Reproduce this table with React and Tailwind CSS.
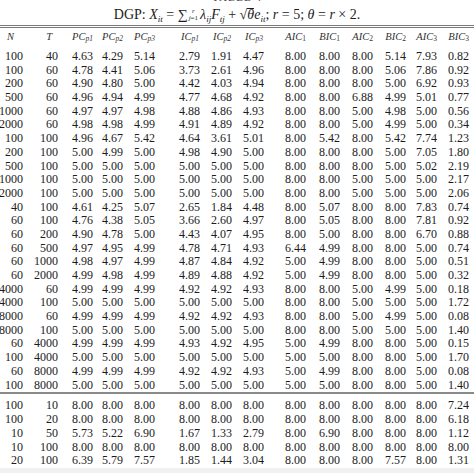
import React from "react";

const block1 = [
  "100 40 4.63 4.29 5.14 2.79 1.91 4.47 8.00 8.00 8.00 5.14 7.93 0.82",
  "100 60 4.78 4.41 5.06 3.73 2.61 4.96 8.00 8.00 8.00 5.06 7.86 0.92",
  "200 60 4.90 4.80 5.00 4.42 4.03 4.94 8.00 8.00 8.00 5.00 6.92 0.93",
  "500 60 4.96 4.94 4.99 4.77 4.68 4.92 8.00 8.00 6.88 4.99 5.01 0.77",
  "1000 60 4.97 4.97 4.98 4.88 4.86 4.93 8.00 8.00 5.00 4.98 5.00 0.56",
  "2000 60 4.98 4.98 4.99 4.91 4.89 4.92 8.00 8.00 5.00 4.99 5.00 0.34",
  "100 100 4.96 4.67 5.42 4.64 3.61 5.01 8.00 5.42 8.00 5.42 7.74 1.23",
  "200 100 5.00 4.99 5.00 4.98 4.90 5.00 8.00 8.00 8.00 5.00 7.05 1.80",
  "500 100 5.00 5.00 5.00 5.00 5.00 5.00 8.00 8.00 8.00 5.00 5.02 2.19",
  "1000 100 5.00 5.00 5.00 5.00 5.00 5.00 8.00 8.00 5.00 5.00 5.00 2.17",
  "2000 100 5.00 5.00 5.00 5.00 5.00 5.00 8.00 8.00 5.00 5.00 5.00 2.06",
  "40 100 4.61 4.25 5.07 2.65 1.84 4.48 8.00 5.07 8.00 8.00 7.83 0.74",
  "60 100 4.76 4.38 5.05 3.66 2.60 4.97 8.00 5.05 8.00 8.00 7.81 0.92",
  "60 200 4.90 4.78 5.00 4.43 4.07 4.95 8.00 5.00 8.00 8.00 6.70 0.88",
  "60 500 4.97 4.95 4.99 4.78 4.71 4.93 6.44 4.99 8.00 8.00 5.00 0.74",
  "60 1000 4.98 4.97 4.99 4.87 4.84 4.92 5.00 4.99 8.00 8.00 5.00 0.51",
  "60 2000 4.99 4.98 4.99 4.89 4.88 4.92 5.00 4.99 8.00 8.00 5.00 0.32",
  "4000 60 4.99 4.99 4.99 4.92 4.92 4.93 8.00 8.00 5.00 4.99 5.00 0.18",
  "4000 100 5.00 5.00 5.00 5.00 5.00 5.00 8.00 8.00 5.00 5.00 5.00 1.72",
  "8000 60 4.99 4.99 4.99 4.92 4.92 4.93 8.00 8.00 5.00 4.99 5.00 0.08",
  "8000 100 5.00 5.00 5.00 5.00 5.00 5.00 8.00 8.00 5.00 5.00 5.00 1.40",
  "60 4000 4.99 4.99 4.99 4.93 4.92 4.95 5.00 4.99 8.00 8.00 5.00 0.15",
  "100 4000 5.00 5.00 5.00 5.00 5.00 5.00 5.00 5.00 8.00 8.00 5.00 1.70",
  "60 8000 4.99 4.99 4.99 4.92 4.92 4.93 5.00 4.99 8.00 8.00 5.00 0.08",
  "100 8000 5.00 5.00 5.00 5.00 5.00 5.00 5.00 5.00 8.00 8.00 5.00 1.40",
];

const block2 = [
  "100 10 8.00 8.00 8.00 8.00 8.00 8.00 8.00 8.00 8.00 8.00 8.00 7.24",
  "100 20 8.00 8.00 8.00 8.00 8.00 8.00 8.00 8.00 8.00 8.00 8.00 6.18",
  "10 50 5.73 5.22 6.90 1.67 1.33 2.79 8.00 6.90 8.00 8.00 8.00 1.12",
  "10 100 8.00 8.00 8.00 8.00 8.00 8.00 8.00 8.00 8.00 8.00 8.00 8.00",
  "20 100 6.39 5.79 7.57 1.85 1.44 3.04 8.00 8.00 8.00 7.57 8.00 1.31",
];

const gridCols =
  "grid grid-cols-[23px_35px_35px_30px_32px_45px_32px_32px_42px_34px_33px_33px_31px_32px]";

function Row({ line }) {
  return (
    <div className={`${gridCols} h-[13.7px] leading-[13.7px] text-[12px]`}>
      {line.split(" ").map((v, i) => (
        <div key={i} className="flex justify-end whitespace-nowrap">
          {v}
        </div>
      ))}
    </div>
  );
}

function Sub({ children, upright }) {
  return (
    <span
      className={`relative top-[2px] text-[7.5px] ${upright ? "not-italic" : "italic"}`}
    >
      {children}
    </span>
  );
}

function H({ main, sub, upright, pr }) {
  return (
    <div className={`flex justify-end whitespace-nowrap ${pr}`}>
      <span className="italic">{main}</span>
      {sub && <Sub upright={upright}>{sub}</Sub>}
    </div>
  );
}

function MSub({ children }) {
  return <span className="relative top-[3px] text-[9px] italic">{children}</span>;
}

export default function App() {
  return (
    <div
      className="w-[474px] h-[473px] overflow-hidden bg-white text-[#1c1c1c]"
      style={{ fontFamily: '"Liberation Serif", "Times New Roman", serif' }}
    >
      <div className="-mt-[10px] h-[15px] text-center text-[11px] leading-[14px] tracking-[1px] text-[#444]">
        TABLE 4
      </div>
      <div className="h-[19px] text-center text-[14px] leading-[19px] whitespace-nowrap">
        DGP: <i>X</i>
        <MSub>it</MSub> = ∑
        <span className="inline-flex flex-col align-middle text-[7px] leading-[7px] ml-[1px] mr-[2px] -mt-[2px]">
          <i>r</i>
          <span>
            <i>j</i>=1
          </span>
        </span>
        <i>λ</i>
        <MSub>ij</MSub>
        <i>F</i>
        <MSub>tj</MSub> + √
        <span className="border-t border-[#1c1c1c] leading-[12px] inline-block">
          <i>θ</i>
        </span>
        <i>e</i>
        <MSub>it</MSub>; <i>r</i> = 5; <i>θ</i> = <i>r</i> × 2.
      </div>
      <div className="mt-[1px] h-[3px] border-y border-[#7a7a7a]" />
      <div
        className={`${gridCols} h-[22px] leading-[18px] text-[10.5px] text-[#333]`}
      >
        <H main="N" pr="pr-[9px]" />
        <H main="T" pr="pr-[6px]" />
        <H main="PC" sub="p1" pr="pr-[0px]" />
        <H main="PC" sub="p2" pr="pr-[0px]" />
        <H main="PC" sub="p3" pr="pr-[0px]" />
        <H main="IC" sub="p1" pr="pr-[1px]" />
        <H main="IC" sub="p2" pr="pr-[1px]" />
        <H main="IC" sub="p3" pr="pr-[1px]" />
        <H main="AIC" sub="1" upright pr="pr-[0px]" />
        <H main="BIC" sub="1" upright pr="pr-[0px]" />
        <H main="AIC" sub="2" upright pr="pr-[0px]" />
        <H main="BIC" sub="2" upright pr="pr-[0px]" />
        <H main="AIC" sub="3" upright pr="pr-[0px]" />
        <H main="BIC" sub="3" upright pr="pr-[0px]" />
      </div>
      {block1.map((l, i) => (
        <Row key={i} line={l} />
      ))}
      <div className="h-[7.3px] border-t-2 border-[#8a8a8a]" />
      {block2.map((l, i) => (
        <Row key={i} line={l} />
      ))}
      <div className="h-[6px] bg-[#f1f1f1]" />
    </div>
  );
}
